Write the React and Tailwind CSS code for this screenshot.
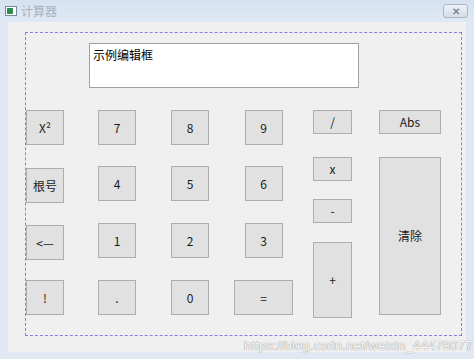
import React from "react";

const font = { fontFamily: '"Noto Sans CJK SC", "Liberation Sans", sans-serif' };

function Btn({ label, className = "" })
{
    return (
        <div
            className={`flex items-center justify-center bg-[#e1e1e1] border border-[#adadad] text-[12px] text-[#1a1a1a] leading-none ${className}`}
        >
            {label}
        </div>
    );
}

export default function App()
{
    return (
        <div className="w-[474px] h-[359px] bg-[#dfe8f3] flex flex-col relative overflow-hidden" style={font}>
            {/* title bar */}
            <div className="h-[22px] flex items-center bg-gradient-to-b from-[#d6e2f0] to-[#dfe9f5] shrink-0">
                <div className="ml-[5px] w-[12px] h-[10px] border border-[#7a8a99] bg-white flex items-center pl-[1px]">
                    <div className="w-[6px] h-[6px] bg-[#2f8a4c]" />
                </div>
                <span className="ml-[4px] text-[12px] text-[#a7b0ba]">计算器</span>
                <div className="ml-auto mr-[6px] w-[25px] h-[14px] rounded-[3px] border border-[#a9b5c4] bg-gradient-to-b from-[#eef2f7] to-[#d5dde8] flex items-center justify-center text-[10px] font-bold text-[#7d8894] leading-none">
                    ✕
                </div>
            </div>

            {/* client area */}
            <div className="mx-[8px] h-[330px] bg-[#f0f0f0] pt-[10px] pl-[17px]">
                <div className="w-[437px] h-[304px] border border-dashed border-[#8080ec]">
                    <div className="ml-[63px] mt-[10px] w-[270px] h-[45px] bg-white border border-[#a0a0a0] px-[3px] pt-[2px] text-[12px] text-black">
                        示例编辑框
                    </div>

                    <div className="flex">
                        <div className="flex flex-col">
                            <Btn label={<span>X²</span>} className="mt-[22px] w-[38px] h-[35px]" />
                            <Btn label="根号" className="mt-[23px] w-[38px] h-[35px]" />
                            <Btn label="<—" className="mt-[22px] w-[38px] h-[35px]" />
                            <Btn label="!" className="mt-[20px] w-[38px] h-[35px]" />
                        </div>
                        <div className="flex flex-col ml-[34px]">
                            <Btn label="7" className="mt-[22px] w-[38px] h-[35px]" />
                            <Btn label="4" className="mt-[21px] w-[38px] h-[35px]" />
                            <Btn label="1" className="mt-[22px] w-[38px] h-[35px]" />
                            <Btn label="." className="mt-[22px] w-[38px] h-[35px]" />
                        </div>
                        <div className="flex flex-col ml-[35px]">
                            <Btn label="8" className="mt-[22px] w-[38px] h-[35px]" />
                            <Btn label="5" className="mt-[21px] w-[38px] h-[35px]" />
                            <Btn label="2" className="mt-[22px] w-[38px] h-[35px]" />
                            <Btn label="0" className="mt-[22px] w-[38px] h-[35px]" />
                        </div>
                        <div className="flex flex-col items-center ml-[25px] w-[59px]">
                            <Btn label="9" className="mt-[22px] w-[38px] h-[35px]" />
                            <Btn label="6" className="mt-[21px] w-[38px] h-[35px]" />
                            <Btn label="3" className="mt-[22px] w-[38px] h-[35px]" />
                            <Btn label="=" className="mt-[22px] w-[59px] h-[35px]" />
                        </div>
                        <div className="flex flex-col ml-[20px]">
                            <Btn label="/" className="mt-[22px] w-[39px] h-[24px]" />
                            <Btn label="x" className="mt-[23px] w-[39px] h-[24px]" />
                            <Btn label="-" className="mt-[18px] w-[39px] h-[24px]" />
                            <Btn label="+" className="mt-[19px] w-[39px] h-[76px]" />
                        </div>
                        <div className="flex flex-col ml-[27px]">
                            <Btn label="Abs" className="mt-[22px] w-[62px] h-[24px]" />
                            <Btn label="清除" className="mt-[23px] w-[62px] h-[158px]" />
                        </div>
                    </div>
                </div>
            </div>

            {/* watermark */}
            <div
                className="absolute left-[244px] top-[336px] text-[13px] text-[#f8f8f8] tracking-[0.2px]"
                style={{ fontFamily: '"Liberation Sans", sans-serif', textShadow: "0 0 1px #9a9a9a, 0 0 1px #9a9a9a" }}
            >
                https://blog.csdn.net/weixin_44478077
            </div>
        </div>
    );
}
